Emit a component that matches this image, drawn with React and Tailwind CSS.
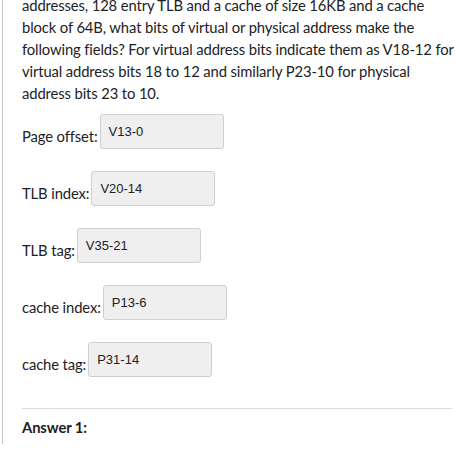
import React from "react";

const rows = [
  { label: "Page offset:", value: "V13-0" },
  { label: "TLB index:", value: "V20-14" },
  { label: "TLB tag:", value: "V35-21" },
  { label: "cache index:", value: "P13-6" },
  { label: "cache tag:", value: "P31-14" },
];

export default function App() {
  return (
    <div className="w-[455px] h-[450px] overflow-hidden bg-white">
      <div
        className="ml-[2px] h-[450px] border-l border-[#c4c4c4] pl-[19px] pr-[1px] text-[#1d2125]"
        style={{ fontFamily: "Lato, 'Noto Sans', sans-serif" }}
      >
        <p className="mt-[-6px] text-[14.8px] tracking-[-0.12px] leading-[22px]">
          addresses, 128 entry TLB and a cache of size 16KB and a cache block of 64B, what bits of virtual or physical address make the following fields? For virtual address bits indicate them as V18-12 for virtual address bits 18 to 12 and similarly P23-10 for physical address bits 23 to 10.
        </p>
        <div className="mt-[10px] flex flex-col gap-[22px]">
          {rows.map((r) => (
            <div key={r.label} className="flex items-center h-[35px]">
              <span className="text-[14.8px] tracking-[-0.12px] leading-[22px] pt-[9px]">{r.label}</span>
              <div
                className="ml-[2px] w-[124px] h-[35px] rounded-[3px] border border-[#cfcfcf] bg-[#efefef] pl-[8px] pt-[9px] text-[13px] leading-[16px] text-[#1d2125]"
                style={{ fontFamily: "'Liberation Sans', Arial, sans-serif" }}
              >
                {r.value}
              </div>
            </div>
          ))}
        </div>
        <div className="mt-[31px] mr-[2px] border-t border-[#dcdcdc]" />
        <div className="mt-[7px] text-[14.8px] tracking-[-0.12px] leading-[22px] font-bold">Answer 1:</div>
      </div>
    </div>
  );
}
